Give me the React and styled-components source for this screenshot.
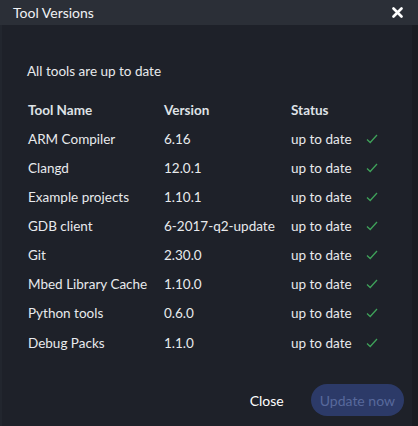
import React from 'react';
import styled, { createGlobalStyle } from 'styled-components';

const GlobalStyle = createGlobalStyle`
    html, body {
        margin: 0;
        padding: 0;
        background: #1e2129;
    }
    body {
        font-family: Lato, "Open Sans", sans-serif;
    }
`;

const tools = [
    ['ARM Compiler', '6.16'],
    ['Clangd', '12.0.1'],
    ['Example projects', '1.10.1'],
    ['GDB client', '6-2017-q2-update'],
    ['Git', '2.30.0'],
    ['Mbed Library Cache', '1.10.0'],
    ['Python tools', '0.6.0'],
    ['Debug Packs', '1.1.0'],
];

const Dialog = styled.div`
    width: 418px;
    height: 426px;
    display: flex;
    flex-direction: column;
    background: #1e2129;
    overflow: hidden;
`;

const Header = styled.div`
    height: 25px;
    flex: none;
    display: flex;
    align-items: center;
    justify-content: space-between;
    padding: 0 15px 0 13px;
    background: #2b2f37;
    color: #f0f2f5;
    font-size: 14px;
`;

const CloseIcon = styled.button`
    border: none;
    background: none;
    padding: 0;
    display: flex;
    cursor: pointer;
`;

const Body = styled.div`
    flex: 1;
    display: flex;
    flex-direction: column;
    padding: 38px 0 0 25px;
    border-left: 2px solid #22262e;
    border-right: 6px solid #1a1c22;
    color: #e8eaed;
    font-size: 13.5px;
`;

const Summary = styled.div`
    line-height: 16px;
    margin-bottom: 16px;
`;

const Table = styled.div`
    display: grid;
    grid-template-columns: 136px 127px 1fr;
    padding-left: 1px;
`;

const Cell = styled.div`
    height: ${props => (props.tall ? '31px' : '29px')};
    display: flex;
    align-items: center;
    white-space: nowrap;
    font-weight: ${props => (props.head ? 700 : 400)};
    color: ${props => (props.head ? '#dfe2e6' : '#e8eaed')};
`;

const Check = styled.svg`
    margin-left: 14px;
`;

const Footer = styled.div`
    margin-top: auto;
    display: flex;
    align-items: center;
    justify-content: flex-end;
    gap: 27px;
    padding: 0 8px 10px 0;
`;

const TextButton = styled.button`
    border: none;
    background: none;
    color: #ffffff;
    font-family: inherit;
    font-size: 14px;
    padding: 0;
`;

const PillButton = styled.button`
    height: 32px;
    padding: 0 9px;
    border: none;
    border-radius: 16px;
    background: #2c3a68;
    color: #58699c;
    font-family: inherit;
    font-size: 14px;
`;

export default function App() {
    return (
        <>
            <GlobalStyle />
            <Dialog>
                <Header>
                    <span>Tool Versions</span>
                    <CloseIcon aria-label="close">
                        <svg width="11" height="11" viewBox="0 0 11 11">
                            <path d="M1.5 1.5 L9.5 9.5 M9.5 1.5 L1.5 9.5" stroke="#ffffff" strokeWidth="2.6" strokeLinecap="round" />
                        </svg>
                    </CloseIcon>
                </Header>
                <Body>
                    <Summary>All tools are up to date</Summary>
                    <Table>
                        <Cell head>Tool Name</Cell>
                        <Cell head>Version</Cell>
                        <Cell head>Status</Cell>
                        {tools.map(([name, version], i) => {
                            const tall = i === tools.length - 1;
                            return (
                                <React.Fragment key={name}>
                                    <Cell tall={tall}>{name}</Cell>
                                    <Cell tall={tall}>{version}</Cell>
                                    <Cell tall={tall}>
                                        up to date
                                        <Check width="12" height="10" viewBox="0 0 12 10">
                                            <path d="M1 5.5 L4.2 8.5 L11 1" fill="none" stroke="#3fa25a" strokeWidth="1.3" />
                                        </Check>
                                    </Cell>
                                </React.Fragment>
                            );
                        })}
                    </Table>
                    <Footer>
                        <TextButton>Close</TextButton>
                        <PillButton disabled>Update now</PillButton>
                    </Footer>
                </Body>
            </Dialog>
        </>
    );
}
